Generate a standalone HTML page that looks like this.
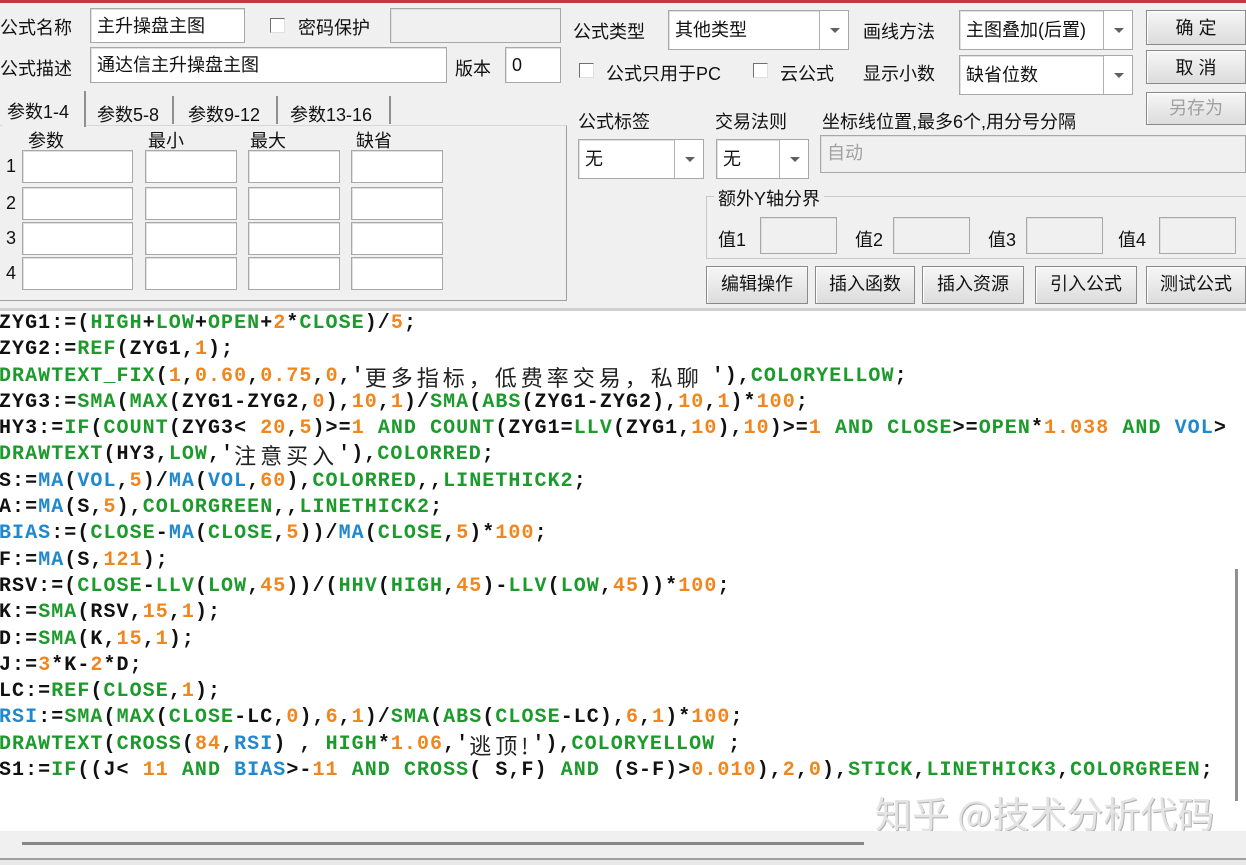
<!DOCTYPE html>
<html><head><meta charset="utf-8">
<style>
*{box-sizing:border-box;margin:0;padding:0}
body{width:1246px;height:865px;overflow:hidden;background:#f0f0f0;position:relative;font-family:"Liberation Sans","Noto Sans CJK SC",sans-serif;font-size:18px;color:#111}
.a{position:absolute;white-space:nowrap}
.in{position:absolute;background:#fff;border:1px solid #a8a8a8;box-shadow:inset 1px 1px 0 #e0e0e0;font-size:18px;padding:4px 6px;line-height:26px}
.dis{background:#f0f0f0;color:#a0a0a0}
.cb{position:absolute;width:15px;height:15px;background:#fff;border:1px solid #707070;border-right-color:#e0e0e0;border-bottom-color:#e0e0e0}
.dd{position:absolute;top:0;right:0;bottom:0;width:29px;border-left:1px solid #b0b0b0;background:#fff}
.dd:after{content:"";position:absolute;left:10px;top:50%;margin-top:-2px;border-left:5px solid transparent;border-right:5px solid transparent;border-top:5px solid #606060}
.btn{position:absolute;background:linear-gradient(#f6f6f6,#dcdcdc);border:1px solid #8a8a8a;box-shadow:inset 1px 1px 0 #fff;text-align:center;font-size:18px;line-height:34px}
.code{position:absolute;left:0;top:311px;width:1246px;height:520px;background:#fff;overflow:hidden}
.pre{position:absolute;left:-1px;top:0;font-family:"Liberation Mono",monospace;font-weight:bold;font-size:20px;letter-spacing:1.06px;color:#111}
.pre div{height:26.3px;line-height:26.3px;white-space:pre;overflow:visible}
.g{color:#1c9a2c}.o{color:#f0861e}.b{color:#2088cc}
.z{font-family:"Noto Sans CJK SC",sans-serif;font-weight:normal;letter-spacing:4px;font-size:22px;color:#222;vertical-align:top;display:inline-block;height:26px;line-height:26px}
</style></head><body>
<div class="a" style="left:0;top:0;width:1246px;height:3px;background:#c8363e"></div>

<div class="a" style="left:0;top:14px">公式名称</div>
<div class="in" style="left:90px;top:8px;width:155px;height:35px">主升操盘主图</div>
<div class="cb" style="left:270px;top:18px"></div>
<div class="a" style="left:298px;top:14px">密码保护</div>
<div class="in dis" style="left:390px;top:8px;width:171px;height:35px"></div>

<div class="a" style="left:0;top:55px">公式描述</div>
<div class="in" style="left:90px;top:47px;width:357px;height:36px">通达信主升操盘主图</div>
<div class="a" style="left:455px;top:55px">版本</div>
<div class="in" style="left:505px;top:47px;width:56px;height:36px">0</div>

<div class="a" style="left:0;top:125px;width:567px;height:176px;border:1px solid #a0a0a0;border-top-color:#d8d8d8;border-left:none"></div>
<div class="a" style="left:2px;top:91px;width:84px;height:36px;background:#f0f0f0;border-right:2px solid #909090"></div>
<div class="a" style="left:7px;top:98px">参数1-4</div>
<div class="a" style="left:97px;top:101px">参数5-8</div>
<div class="a" style="left:172px;top:96px;width:2px;height:28px;background:#909090"></div>
<div class="a" style="left:188px;top:101px">参数9-12</div>
<div class="a" style="left:276px;top:96px;width:2px;height:28px;background:#909090"></div>
<div class="a" style="left:290px;top:101px">参数13-16</div>
<div class="a" style="left:389px;top:96px;width:2px;height:28px;background:#909090"></div>

<div class="a" style="left:28px;top:127px">参数</div>
<div class="a" style="left:148px;top:127px">最小</div>
<div class="a" style="left:250px;top:127px">最大</div>
<div class="a" style="left:356px;top:127px">缺省</div>

<div class="a" style="left:6px;top:156px">1</div>
<div class="a" style="left:6px;top:193px">2</div>
<div class="a" style="left:6px;top:228px">3</div>
<div class="a" style="left:6px;top:263px">4</div>
<div class="in" style="left:22px;top:150px;width:111px;height:33px"></div>
<div class="in" style="left:145px;top:150px;width:92px;height:33px"></div>
<div class="in" style="left:248px;top:150px;width:92px;height:33px"></div>
<div class="in" style="left:351px;top:150px;width:92px;height:33px"></div>
<div class="in" style="left:22px;top:187px;width:111px;height:33px"></div>
<div class="in" style="left:145px;top:187px;width:92px;height:33px"></div>
<div class="in" style="left:248px;top:187px;width:92px;height:33px"></div>
<div class="in" style="left:351px;top:187px;width:92px;height:33px"></div>
<div class="in" style="left:22px;top:222px;width:111px;height:33px"></div>
<div class="in" style="left:145px;top:222px;width:92px;height:33px"></div>
<div class="in" style="left:248px;top:222px;width:92px;height:33px"></div>
<div class="in" style="left:351px;top:222px;width:92px;height:33px"></div>
<div class="in" style="left:22px;top:257px;width:111px;height:33px"></div>
<div class="in" style="left:145px;top:257px;width:92px;height:33px"></div>
<div class="in" style="left:248px;top:257px;width:92px;height:33px"></div>
<div class="in" style="left:351px;top:257px;width:92px;height:33px"></div>

<div class="a" style="left:573px;top:18px">公式类型</div>
<div class="in" style="left:668px;top:10px;width:181px;height:40px;line-height:30px">其他类型<div class="dd"></div></div>
<div class="a" style="left:863px;top:18px">画线方法</div>
<div class="in" style="left:959px;top:10px;width:174px;height:40px;line-height:30px">主图叠加(后置)<div class="dd"></div></div>
<div class="btn" style="left:1146px;top:10px;width:100px;height:35px">确 定</div>
<div class="btn" style="left:1146px;top:50px;width:100px;height:34px">取 消</div>
<div class="btn" style="left:1146px;top:92px;width:100px;height:33px;color:#a0a0a0;line-height:30px">另存为</div>

<div class="cb" style="left:579px;top:63px"></div>
<div class="a" style="left:606px;top:60px">公式只用于PC</div>
<div class="cb" style="left:753px;top:63px"></div>
<div class="a" style="left:780px;top:60px">云公式</div>
<div class="a" style="left:863px;top:60px">显示小数</div>
<div class="in" style="left:959px;top:55px;width:174px;height:40px;line-height:30px">缺省位数<div class="dd"></div></div>

<div class="a" style="left:578px;top:108px">公式标签</div>
<div class="a" style="left:715px;top:108px">交易法则</div>
<div class="a" style="left:822px;top:108px">坐标线位置,最多6个,用分号分隔</div>
<div class="in" style="left:578px;top:139px;width:126px;height:40px;line-height:30px">无<div class="dd"></div></div>
<div class="in" style="left:716px;top:139px;width:93px;height:40px;line-height:30px">无<div class="dd"></div></div>
<div class="in dis" style="left:820px;top:135px;width:426px;height:38px">自动</div>

<div class="a" style="left:706px;top:196px;width:542px;height:63px;border:1px solid #c8c8c8"></div>
<div class="a" style="left:714px;top:185px;background:#f0f0f0;padding:0 4px">额外Y轴分界</div>
<div class="a" style="left:718px;top:226px">值1</div>
<div class="in dis" style="left:760px;top:217px;width:77px;height:37px"></div>
<div class="a" style="left:855px;top:226px">值2</div>
<div class="in dis" style="left:893px;top:217px;width:77px;height:37px"></div>
<div class="a" style="left:988px;top:226px">值3</div>
<div class="in dis" style="left:1026px;top:217px;width:77px;height:37px"></div>
<div class="a" style="left:1118px;top:226px">值4</div>
<div class="in dis" style="left:1159px;top:217px;width:77px;height:37px"></div>

<div class="btn" style="left:706px;top:266px;width:102px;height:38px">编辑操作</div>
<div class="btn" style="left:815px;top:266px;width:100px;height:38px">插入函数</div>
<div class="btn" style="left:922px;top:266px;width:102px;height:38px">插入资源</div>
<div class="btn" style="left:1035px;top:266px;width:102px;height:38px">引入公式</div>
<div class="btn" style="left:1146px;top:266px;width:100px;height:38px">测试公式</div>

<div class="a" style="left:0;top:308px;width:1246px;height:3px;background:#d0d0d0"></div>
<div class="code"><div class="pre">
<div>ZYG1:=(<span class="g">HIGH</span>+<span class="g">LOW</span>+<span class="g">OPEN</span>+<span class="o">2</span>*<span class="g">CLOSE</span>)/<span class="o">5</span>;</div>
<div>ZYG2:=<span class="g">REF</span>(ZYG1,<span class="o">1</span>);</div>
<div><span class="g">DRAWTEXT_FIX</span>(<span class="o">1</span>,<span class="o">0.60</span>,<span class="o">0.75</span>,<span class="o">0</span>,'<span class="z">更多指标，低费率交易，私聊 </span>'),<span class="g">COLORYELLOW</span>;</div>
<div>ZYG3:=<span class="g">SMA</span>(<span class="g">MAX</span>(ZYG1-ZYG2,<span class="o">0</span>),<span class="o">10</span>,<span class="o">1</span>)/<span class="g">SMA</span>(<span class="g">ABS</span>(ZYG1-ZYG2),<span class="o">10</span>,<span class="o">1</span>)*<span class="o">100</span>;</div>
<div>HY3:=<span class="g">IF</span>(<span class="g">COUNT</span>(ZYG3&lt; <span class="o">20</span>,<span class="o">5</span>)&gt;=<span class="o">1</span> <span class="g">AND</span> <span class="g">COUNT</span>(ZYG1=<span class="g">LLV</span>(ZYG1,<span class="o">10</span>),<span class="o">10</span>)&gt;=<span class="o">1</span> <span class="g">AND</span> <span class="g">CLOSE</span>&gt;=<span class="g">OPEN</span>*<span class="o">1.038</span> <span class="g">AND</span> <span class="b">VOL</span>&gt;</div>
<div><span class="g">DRAWTEXT</span>(HY3,<span class="g">LOW</span>,'<span class="z">注意买入</span>'),<span class="g">COLORRED</span>;</div>
<div>S:=<span class="b">MA</span>(<span class="b">VOL</span>,<span class="o">5</span>)/<span class="b">MA</span>(<span class="b">VOL</span>,<span class="o">60</span>),<span class="g">COLORRED</span>,,<span class="g">LINETHICK2</span>;</div>
<div>A:=<span class="b">MA</span>(S,<span class="o">5</span>),<span class="g">COLORGREEN</span>,,<span class="g">LINETHICK2</span>;</div>
<div><span class="b">BIAS</span>:=(<span class="g">CLOSE</span>-<span class="b">MA</span>(<span class="g">CLOSE</span>,<span class="o">5</span>))/<span class="b">MA</span>(<span class="g">CLOSE</span>,<span class="o">5</span>)*<span class="o">100</span>;</div>
<div>F:=<span class="b">MA</span>(S,<span class="o">121</span>);</div>
<div>RSV:=(<span class="g">CLOSE</span>-<span class="g">LLV</span>(<span class="g">LOW</span>,<span class="o">45</span>))/(<span class="g">HHV</span>(<span class="g">HIGH</span>,<span class="o">45</span>)-<span class="g">LLV</span>(<span class="g">LOW</span>,<span class="o">45</span>))*<span class="o">100</span>;</div>
<div>K:=<span class="g">SMA</span>(RSV,<span class="o">15</span>,<span class="o">1</span>);</div>
<div>D:=<span class="g">SMA</span>(K,<span class="o">15</span>,<span class="o">1</span>);</div>
<div>J:=<span class="o">3</span>*K-<span class="o">2</span>*D;</div>
<div>LC:=<span class="g">REF</span>(<span class="g">CLOSE</span>,<span class="o">1</span>);</div>
<div><span class="b">RSI</span>:=<span class="g">SMA</span>(<span class="g">MAX</span>(<span class="g">CLOSE</span>-LC,<span class="o">0</span>),<span class="o">6</span>,<span class="o">1</span>)/<span class="g">SMA</span>(<span class="g">ABS</span>(<span class="g">CLOSE</span>-LC),<span class="o">6</span>,<span class="o">1</span>)*<span class="o">100</span>;</div>
<div><span class="g">DRAWTEXT</span>(<span class="g">CROSS</span>(<span class="o">84</span>,<span class="b">RSI</span>) , <span class="g">HIGH</span>*<span class="o">1.06</span>,'<span class="z">逃顶!</span>'),<span class="g">COLORYELLOW</span> ;</div>
<div>S1:=<span class="g">IF</span>((J&lt; <span class="o">11</span> <span class="g">AND</span> <span class="b">BIAS</span>&gt;-<span class="o">11</span> <span class="g">AND</span> <span class="g">CROSS</span>( S,F) <span class="g">AND</span> (S-F)&gt;<span class="o">0.010</span>),<span class="o">2</span>,<span class="o">0</span>),<span class="g">STICK</span>,<span class="g">LINETHICK3</span>,<span class="g">COLORGREEN</span>;</div>
</div>
<div class="a" style="left:1235px;top:258px;width:3px;height:232px;background:#909090"></div>
<div class="a" style="left:875px;top:474px;font-family:'Noto Sans CJK SC',sans-serif;font-size:37px;color:#e4e4e4;text-shadow:1px 1px 0 #b0b0b0">知乎 @技术分析代码</div>
</div>
<div class="a" style="left:0;top:831px;width:1246px;height:27px;background:#f0f0f0"></div>
<div class="a" style="left:22px;top:842px;width:842px;height:3px;background:#888"></div>
<div class="a" style="left:0;top:858px;width:1246px;height:2px;background:#a0a0a0"></div>
<div class="a" style="left:0;top:860px;width:1246px;height:5px;background:#e8e8e8"></div>
</body></html>
